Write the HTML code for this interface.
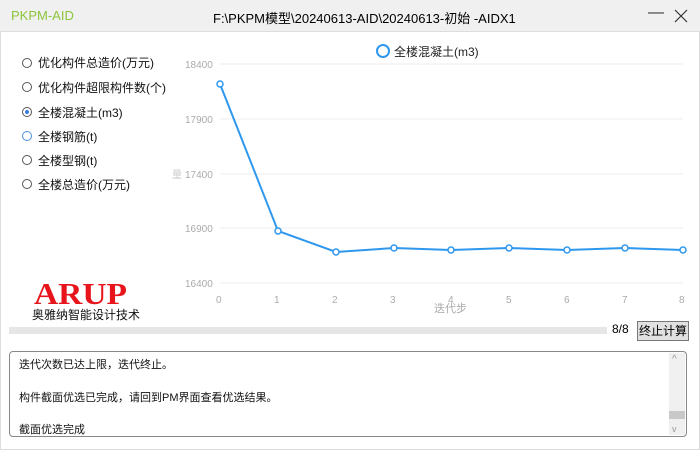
<!DOCTYPE html>
<html><head><meta charset="utf-8"><style>
body{margin:0;width:700px;height:450px;overflow:hidden;background:#fff;font-family:"Liberation Sans","Noto Sans CJK SC",sans-serif;position:relative}
.t{position:absolute;white-space:nowrap}
.tb{position:absolute;left:0;top:0;width:700px;height:31px;background:#f0f0f0}
.r{position:absolute;left:22px;width:10px;height:10px;border:1px solid #555;border-radius:50%;box-sizing:border-box}
.lab{position:absolute;left:38px;font-size:12px;color:#111}
</style></head><body>
<div class="tb"></div>
<div class="t" style="left:11px;top:8px;font-size:13px;color:#8cc43c">PKPM-AID</div>
<div class="t" style="left:213px;top:8px;font-size:13px;color:#000">F:\PKPM模型\20240613-AID\20240613-初始 -AIDX1</div>
<div class="t" style="left:648px;top:4px;font-size:16px;color:#333">—</div>
<svg class="t" style="left:674px;top:9px" width="14" height="14"><path d="M1 1L13 13M13 1L1 13" stroke="#333" stroke-width="1.2"/></svg>
<div style="position:absolute;left:0;top:31px;width:700px;height:419px;border:1px solid #ddd;box-sizing:border-box"></div>

<div class="r" style="top:58px"></div><div class="lab" style="top:54px">优化构件总造价(万元)</div>
<div class="r" style="top:82px"></div><div class="lab" style="top:79px">优化构件超限构件数(个)</div>
<div class="r" style="top:107px"></div><div style="position:absolute;left:25px;top:110px;width:4px;height:4px;border-radius:50%;background:#3a7be0"></div><div class="lab" style="top:104px">全楼混凝土(m3)</div>
<div class="r" style="top:131px;border-color:#4a8ee0"></div><div class="lab" style="top:128px">全楼钢筋(t)</div>
<div class="r" style="top:155px"></div><div class="lab" style="top:152px">全楼型钢(t)</div>
<div class="r" style="top:179px"></div><div class="lab" style="top:176px">全楼总造价(万元)</div>

<svg class="t" style="left:0;top:0" width="700" height="320">
<g stroke="#eee" stroke-width="1">
<line x1="220" y1="64" x2="683" y2="64"/><line x1="220" y1="119" x2="683" y2="119"/><line x1="220" y1="174" x2="683" y2="174"/><line x1="220" y1="228" x2="683" y2="228"/><line x1="220" y1="283" x2="683" y2="283"/></g>
<g font-size="10" fill="#aaa" font-family="Liberation Sans,sans-serif">
<text x="185" y="68">18400</text><text x="185" y="123">17900</text><text x="185" y="178">17400</text><text x="185" y="232">16900</text><text x="185" y="287">16400</text>
<text x="216" y="303">0</text><text x="274" y="303">1</text><text x="332" y="303">2</text><text x="390" y="303">3</text><text x="448" y="303">4</text><text x="506" y="303">5</text><text x="564" y="303">6</text><text x="622" y="303">7</text><text x="679" y="303">8</text>
</g>
<text x="434" y="312" font-size="11" fill="#aaa" font-family="Noto Sans CJK SC,sans-serif">迭代步</text>
<text x="172" y="178" font-size="10" fill="#ccc" font-family="Noto Sans CJK SC,sans-serif">量</text>
<polyline fill="none" stroke="#2e97ee" stroke-width="2" points="220,84 278,231 336,252 394,248 451,250 509,248 567,250 625,248 683,250"/>
<g fill="#fff" stroke="#2e97ee" stroke-width="1.5">
<circle cx="220" cy="84" r="3"/><circle cx="278" cy="231" r="3"/><circle cx="336" cy="252" r="3"/><circle cx="394" cy="248" r="3"/><circle cx="451" cy="250" r="3"/><circle cx="509" cy="248" r="3"/><circle cx="567" cy="250" r="3"/><circle cx="625" cy="248" r="3"/><circle cx="683" cy="250" r="3"/></g>
<circle cx="383" cy="51" r="6" fill="#fff" stroke="#2e97ee" stroke-width="2"/>
</svg>
<div class="t" style="left:394px;top:43px;font-size:12px;color:#222">全楼混凝土(m3)</div>

<div class="t" style="left:34px;top:277px;font-size:31px;line-height:34px;color:#e8141c;font-family:'Liberation Serif',serif;font-weight:bold;transform:scaleX(1.08);transform-origin:left">ARUP</div>
<div class="t" style="left:32px;top:306px;font-size:12px;color:#111">奥雅纳智能设计技术</div>

<div style="position:absolute;left:9px;top:327px;width:598px;height:7px;background:#e6e6e6"></div>
<div class="t" style="left:612px;top:322px;font-size:12px;color:#000">8/8</div>
<div class="t" style="left:637px;top:321px;width:50px;height:18px;border:1px solid #777;background:#e1e1e1;font-size:12px;line-height:18px;text-align:center">终止计算</div>

<div style="position:absolute;left:9px;top:351px;width:678px;height:86px;border:1px solid #888;border-radius:4px;box-sizing:border-box"></div>
<div style="position:absolute;left:669px;top:353px;width:16px;height:82px;background:#f0f0f0"></div>
<div style="position:absolute;left:669px;top:411px;width:16px;height:8px;background:#c8c8c8"></div>
<div class="t" style="left:672px;top:354px;font-size:10px;color:#999">^</div>
<div class="t" style="left:672px;top:424px;font-size:9px;color:#999">v</div>
<div class="t" style="left:19px;top:356px;font-size:11px;color:#111">迭代次数已达上限，迭代终止。</div>
<div class="t" style="left:19px;top:389px;font-size:11px;color:#111">构件截面优选已完成，请回到PM界面查看优选结果。</div>
<div class="t" style="left:19px;top:421px;font-size:11px;color:#111">截面优选完成</div>
</body></html>
